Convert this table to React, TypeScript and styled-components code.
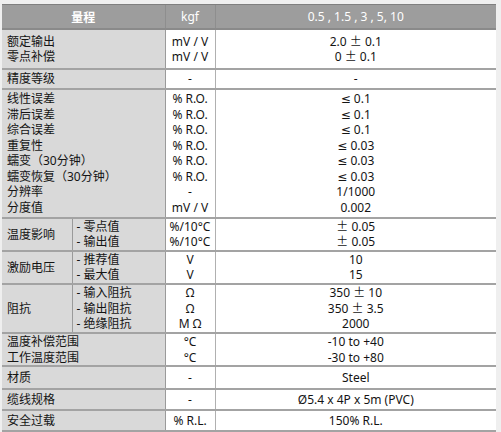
import styled, { createGlobalStyle } from 'styled-components';

const GlobalStyle = createGlobalStyle`
  html, body {
    margin: 0;
    background: #efefef;
  }
  body {
    font-family: "Noto Sans", "Noto Sans CJK SC", sans-serif;
  }
`;

const Page = styled.div`
  padding: 4px 5px 0 2px;
`;

const Table = styled.table`
  width: 494px;
  border-collapse: collapse;
  table-layout: fixed;
  font-size: 12px;
  color: #141414;
`;

const HeadCell = styled.th<{ $bold?: boolean }>`
  height: 23px;
  padding: 0;
  background: #9d9d9d;
  color: #fff;
  font-weight: ${(p) => (p.$bold ? 700 : 400)};
  font-size: 12px;
  text-align: center;
  border-top: 1px solid #7f7f7f;
  border-bottom: 2px solid #8a8a8a;
  border-left: 1px solid #8e8e8e;
  &:first-child {
    border-left: none;
  }
`;

const Group = styled.tr`
  border-top: 2px solid #a3a3a3;
  &:last-child {
    border-bottom: 2px solid #a3a3a3;
  }
`;

const Cell = styled.td<{ $kind: 'label' | 'sub' | 'unit' | 'value'; $pad: number }>`
  padding: ${(p) => p.$pad}px 0;
  vertical-align: middle;
  background: ${(p) => (p.$kind === 'label' || p.$kind === 'sub' ? '#d9d9d9' : '#fff')};
  text-align: ${(p) => (p.$kind === 'label' || p.$kind === 'sub' ? 'left' : 'center')};
  padding-left: ${(p) => (p.$kind === 'label' ? '5px' : p.$kind === 'sub' ? '4px' : '0')};
  border-left: 1px solid ${(p) => (p.$kind === 'value' ? '#b0b0b0' : '#9a9a9a')};
  &:first-child {
    border-left: none;
  }
`;

const Line = styled.div`
  height: 15.5px;
  line-height: 15.5px;
  white-space: nowrap;
`;

// math signs look like they come from a different font in the original
const Sym = styled.span<{ $le?: boolean }>`
  font-family: ${(p) => (p.$le ? '"DejaVu Sans"' : '"Noto Sans CJK SC"')}, sans-serif;
  font-size: 12px;
  line-height: 1;
`;

const withSymbols = (text: string) =>
  text.split(/([±≤])/).map((part, i) =>
    part === '±' || part === '≤' ? (
      <Sym key={i} $le={part === '≤'}>
        {part}
      </Sym>
    ) : (
      part
    )
  );

type Row = [string, string, string];
type Spec = { label?: string; pad?: number; rows: Row[] };

const specs: Spec[] = [
  {
    pad: 3.5,
    rows: [
      ['额定输出', 'mV / V', '2.0 ± 0.1'],
      ['零点补偿', 'mV / V', '0 ± 0.1'],
    ],
  },
  { pad: 1, rows: [['精度等级', '-', '-']] },
  {
    pad: 1.5,
    rows: [
      ['线性误差', '% R.O.', '≤ 0.1'],
      ['滞后误差', '% R.O.', '≤ 0.1'],
      ['综合误差', '% R.O.', '≤ 0.1'],
      ['重复性', '% R.O.', '≤ 0.03'],
      ['蠕变（30分钟）', '% R.O.', '≤ 0.03'],
      ['蠕变恢复（30分钟）', '% R.O.', '≤ 0.03'],
      ['分辨率', '-', '1/1000'],
      ['分度值', 'mV / V', '0.002'],
    ],
  },
  {
    label: '温度影响',
    pad: 0,
    rows: [
      ['- 零点值', '%/10°C', '± 0.05'],
      ['- 输出值', '%/10°C', '± 0.05'],
    ],
  },
  {
    label: '激励电压',
    pad: 0,
    rows: [
      ['- 推荐值', 'V', '10'],
      ['- 最大值', 'V', '15'],
    ],
  },
  {
    label: '阻抗',
    pad: 0.5,
    rows: [
      ['- 输入阻抗', 'Ω', '350 ± 10'],
      ['- 输出阻抗', 'Ω', '350 ± 3.5'],
      ['- 绝缘阻抗', 'M Ω', '2000'],
    ],
  },
  {
    pad: 0,
    rows: [
      ['温度补偿范围', '°C', '-10 to +40'],
      ['工作温度范围', '°C', '-30 to +80'],
    ],
  },
  { pad: 2.5, rows: [['材质', '-', 'Steel']] },
  { pad: 2, rows: [['缆线规格', '-', 'Ø5.4 x 4P x 5m (PVC)']] },
  { pad: 1.5, rows: [['安全过载', '% R.L.', '150% R.L.']] },
];

const lines = (rows: Row[], i: number) =>
  rows.map((r, k) => <Line key={k}>{withSymbols(r[i])}</Line>);

export default function App() {
  return (
    <>
      <GlobalStyle />
      <Page>
        <Table>
          <colgroup>
            <col style={{ width: 70 }} />
            <col style={{ width: 93 }} />
            <col style={{ width: 50 }} />
            <col />
          </colgroup>
          <thead>
            <tr>
              <HeadCell colSpan={2} $bold>
                量程
              </HeadCell>
              <HeadCell>kgf</HeadCell>
              <HeadCell>0.5 , 1.5 , 3 , 5, 10</HeadCell>
            </tr>
          </thead>
          <tbody>
            {specs.map((g, i) => {
              const pad = g.pad ?? 1;
              return (
                <Group key={i}>
                  {g.label ? (
                    <>
                      <Cell $kind="label" $pad={pad}>
                        {g.label}
                      </Cell>
                      <Cell $kind="sub" $pad={pad}>
                        {lines(g.rows, 0)}
                      </Cell>
                    </>
                  ) : (
                    <Cell $kind="label" $pad={pad} colSpan={2}>
                      {lines(g.rows, 0)}
                    </Cell>
                  )}
                  <Cell $kind="unit" $pad={pad}>
                    {lines(g.rows, 1)}
                  </Cell>
                  <Cell $kind="value" $pad={pad}>
                    {lines(g.rows, 2)}
                  </Cell>
                </Group>
              );
            })}
          </tbody>
        </Table>
      </Page>
    </>
  );
}
